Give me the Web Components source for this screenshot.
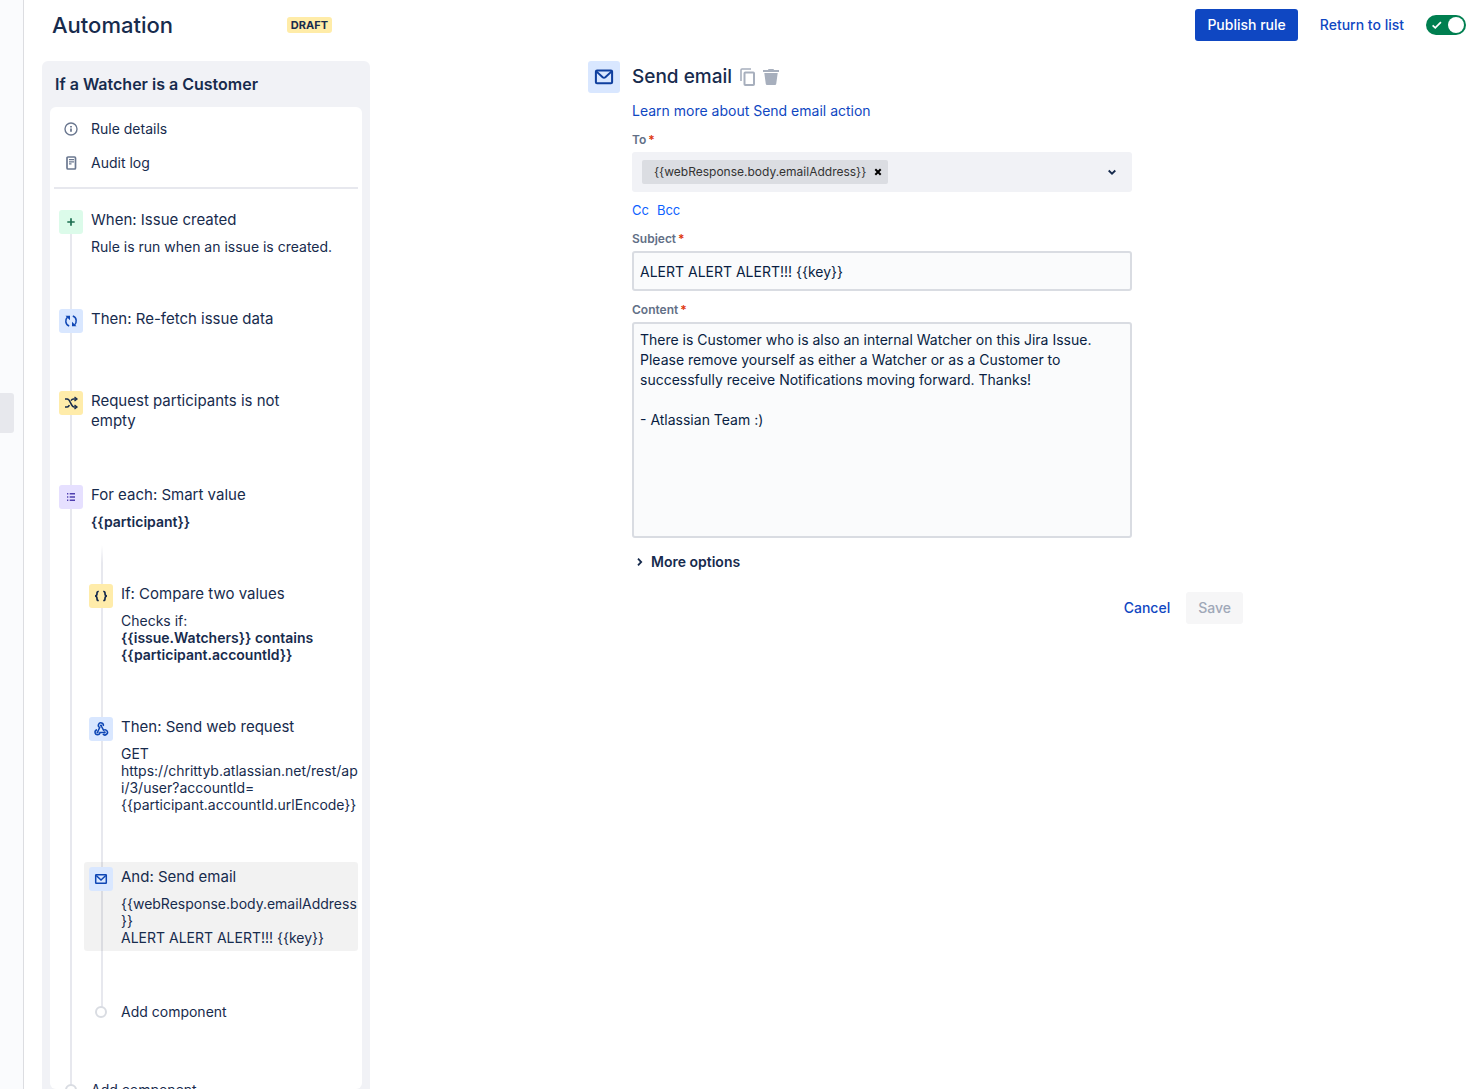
<!DOCTYPE html>
<html lang="en">
<head>
<meta charset="utf-8">
<meta name="viewport" content="width=device-width, initial-scale=1">
<title>Automation</title>
<style>
    :root {
        --text: #172b4d;
        --text-subtle: #626f86;
        --link: #0f47c2;
        --surface-sunken: #f1f2f6;
        --line: #e7e8ee;
        --border: #d9dce2;
        --input: #fafbfc;
    }

    body {
        margin: 0;
        color: var(--text);
        background: #fff;
        font-family: Inter, "Liberation Sans", sans-serif;
        font-size: 14px;
        line-height: 20px;
    }
</style>
</head>
<body>
<automation-app>
    <rule-header slot="header" heading="Automation" status="Draft"></rule-header>

    <rule-sidebar slot="sidebar" heading="If a Watcher is a Customer">
        <rule-link slot="links" icon="info">Rule details</rule-link>
        <rule-link slot="links" icon="log">Audit log</rule-link>

        <rule-step icon="plus" tone="green" heading="When: Issue created">Rule is run when an issue is created.</rule-step>
        <rule-step icon="refresh" tone="blue" heading="Then: Re-fetch issue data"></rule-step>
        <rule-step icon="shuffle" tone="yellow" heading="Request participants is not empty"></rule-step>
        <rule-step icon="list" tone="purple" heading="For each: Smart value"><b>{{participant}}</b></rule-step>
        <rule-branch>
            <rule-step icon="braces" tone="yellow" heading="If: Compare two values">Checks if:<br><b>{{issue.Watchers}} contains {{participant.accountId}}</b></rule-step>
            <rule-step icon="webhook" tone="blue" heading="Then: Send web request">GET<br>https://chrittyb.atlassian.net/rest/api/3/user?accountId=<br>{{participant.accountId.urlEncode}}</rule-step>
            <rule-step icon="mail" tone="blue" heading="And: Send email" selected>{{webResponse.body.emailAddress}}<br>ALERT ALERT ALERT!!! {{key}}</rule-step>
            <add-component></add-component>
        </rule-branch>
        <add-component></add-component>
    </rule-sidebar>

    <email-action></email-action>
</automation-app>

<script>
const ICONS = {
    info: '<circle cx="8" cy="8" r="6"/><path d="M8 7.6v3.2" stroke-width="1.800"/><path d="M8 5v1.500" stroke-width="1.800"/>',
    log: '<rect x="4" y="2" width="8.500" height="12" rx="1" stroke-width="1.700"/><path d="M6 4.700h5M6 6.800h5M6 8.900h2.500" stroke-width="1.200"/>',
    plus: '<path d="M8 4.300v7.400M4.300 8h7.400" stroke-width="1.700"/>',
    refresh: '<path d="M6.200 13C2 11.500 2 6.500 4.500 4M9.800 3C14 4.500 14 9.500 11.500 12"/><path d="M2.500 2.700H7v4.500zM13.500 13.300H9V8.800z" fill="currentColor" stroke="none"/>',
    shuffle: '<path d="M2 4h2.200c3.300 0 3.500 8 7 8H13M2 12h2.200c1 0 1.700-.8 2.200-1.800M8 5.600C8.600 4.600 9.500 4 10.500 4H13"/><path d="M11.500 2L14 4l-2.500 2M11.500 10l2.500 2-2.500 2" stroke-width="1.300"/>',
    list: '<path d="M4 4.700h1.300M4 8h1.300M4 11.300h1.300M6.700 4.700H12M6.700 8H12M6.700 11.300H12"/>',
    braces: '<path d="M5.800 3.500h-.6C4 3.500 4 4.300 4 5.500S3.800 8 2 8C3.800 8 4 9.300 4 10.500s0 2 1.200 2h.6M10.200 3.500h.6c1.200 0 1.200.8 1.200 2S12.200 8 14 8C12.200 8 12 9.300 12 10.500s0 2-1.200 2h-.6" stroke-width="1.700"/>',
    webhook: '<g stroke-width="1.500"><path d="M10.300 5A2.500 2.500 0 1 0 6.700 6.600L4.600 10.900"/><path d="M8 4.500l2.500 4.700a2.600 2.600 0 1 1-.6 3.900"/><path d="M4 8.700a2.500 2.500 0 1 0 3 2.700h4.600"/></g><g fill="currentColor" stroke="none"><circle cx="8" cy="4.500" r="1.100"/><circle cx="4.500" cy="11.300" r="1.100"/><circle cx="11.700" cy="11.400" r="1.100"/></g>',
    mail: '<rect x="2.700" y="3.700" width="10.600" height="8.600" rx=".5"/><path d="M3.200 4.500L8 9l4.800-4.500"/>',
    mailLarge: '<rect x="0.800" y="2.200" width="14.400" height="11.400" rx="1"/><path d="M1.200 3l5.600 5.200q1.200 1 2.400 0L14.800 3"/>',
    chevronDown: '<path d="M4.700 6.500L8 9.700l3.300-3.200"/>',
    chevronRight: '<path d="M6 4.700L9.200 8 6 11.300"/>',
    cross: '<path d="M5.300 5.300l5.400 5.400M10.700 5.300l-5.400 5.400"/>',
    check: '<path d="M3 8.300l3 2.900 6.500-6.400"/>'
};

function icon(name, size = 16, weight = 1.5) {
    return `<svg width="${size}" height="${size}" viewBox="0 0 16 16" fill="none" stroke="currentColor" stroke-width="${weight}" overflow="visible" aria-hidden="true">${ICONS[name]}</svg>`;
}

const BASE = `
    :host, * { box-sizing: border-box; }
    button, input, textarea { font: inherit; color: inherit; margin: 0; }
    button { border: 0; padding: 0; background: none; cursor: pointer; }
    svg { display: block; flex-shrink: 0; }
    a { color: var(--link); text-decoration: none; }
`;

/** Page frame: collapsed nav rail, header on top, sidebar beside the editor */
class AutomationApp extends HTMLElement {
    constructor() {
        super();
        this.attachShadow({ mode: 'open' }).innerHTML = `
            <style>
                ${BASE}
                :host { display: flex; height: 100vh; overflow: hidden; }
                .rail {
                    display: flex;
                    align-items: center;
                    flex: 0 0 24px;
                    padding-bottom: 263px;
                    background: #fafbfd;
                    border-right: 1px solid #dcdde1;
                }
                .handle { width: 14px; height: 40px; background: #e7e8ed; border-radius: 0 3px 3px 0; }
                .main {
                    flex: 1;
                    min-width: 0;
                    display: flex;
                    flex-direction: column;
                    padding: 0 18px;
                }
                .body { flex: 1; min-height: 0; display: flex; }
                .editor { flex: 1; min-width: 0; overflow: auto; }
            </style>
            <nav class="rail" aria-label="Project navigation"><button class="handle" aria-label="Expand"></button></nav>
            <div class="main">
                <slot name="header"></slot>
                <div class="body">
                    <slot name="sidebar"></slot>
                    <main class="editor"><slot></slot></main>
                </div>
            </div>
        `;
    }
}

class RuleHeader extends HTMLElement {
    constructor() {
        super();
        this.attachShadow({ mode: 'open' });
    }

    connectedCallback() {
        this.shadowRoot.innerHTML = `
            <style>
                ${BASE}
                :host { display: flex; justify-content: space-between; align-items: center; flex: 0 0 50px; margin-bottom: 11px; }
                .title { display: flex; align-items: center; justify-content: space-between; width: 290px; padding-left: 10px; }
                h1 { margin: 0; font-size: 22px; line-height: 28px; font-weight: 500; }
                .badge {
                    padding: 0 4px;
                    border-radius: 3px;
                    background: #ffeca8;
                    font-size: 11px;
                    line-height: 16px;
                    font-weight: 700;
                    text-transform: uppercase;
                }
                .actions { display: flex; align-items: center; gap: 10px; }
                .btn { height: 32px; padding: 0 12px; border-radius: 3px; font-weight: 500; color: var(--link); line-height: 32px; }
                .primary { background: var(--link); color: #fff; }
                .toggle { position: relative; display: block; width: 40px; height: 20px; color: #fff; }
                .toggle input {
                    appearance: none;
                    display: flex;
                    justify-content: flex-end;
                    width: 40px;
                    height: 20px;
                    padding: 2px;
                    border-radius: 10px;
                    background: #007f50;
                }
                .toggle input::before { content: ""; width: 16px; height: 16px; border-radius: 50%; background: #fff; }
                .toggle svg { position: absolute; left: 4px; top: 3px; pointer-events: none; }
            </style>
            <div class="title">
                <h1>${this.getAttribute('heading')}</h1>
                <span class="badge">${this.getAttribute('status')}</span>
            </div>
            <div class="actions">
                <button class="btn primary">Publish rule</button>
                <a class="btn" href="#">Return to list</a>
                <label class="toggle"><input type="checkbox" checked aria-label="Rule enabled">${icon('check', 14, 2)}</label>
            </div>
        `;
    }
}

class RuleSidebar extends HTMLElement {
    constructor() {
        super();
        this.attachShadow({ mode: 'open' });
    }

    connectedCallback() {
        this.shadowRoot.innerHTML = `
            <style>
                ${BASE}
                :host {
                    display: flex;
                    flex-direction: column;
                    flex: 0 0 328px;
                    padding: 0 8px;
                    background: var(--surface-sunken);
                    border-radius: 6px 6px 0 0;
                    min-height: 0;
                }
                h2 { flex: 0 0 46px; margin: 0; padding-left: 5px; font-size: 16px; line-height: 46px; font-weight: 600; }
                .card { flex: 1; min-height: 0; overflow: hidden; padding: 5px 4px 0; background: #fff; border-radius: 6px; }
                .links { padding-bottom: 7px; border-bottom: 2px solid var(--line); margin-bottom: 16px; }
                .steps {
                    display: flex;
                    flex-direction: column;
                    gap: 44px;
                    background: linear-gradient(var(--line), var(--line)) 16px 17px / 2px calc(100% - 34px) no-repeat;
                }
            </style>
            <h2>${this.getAttribute('heading')}</h2>
            <div class="card">
                <div class="links"><slot name="links"></slot></div>
                <div class="steps"><slot></slot></div>
            </div>
        `;
    }
}

class RuleLink extends HTMLElement {
    constructor() {
        super();
        this.attachShadow({ mode: 'open' });
    }

    connectedCallback() {
        this.shadowRoot.innerHTML = `
            <style>
                ${BASE}
                :host { display: block; }
                a { display: flex; align-items: center; gap: 12px; height: 34px; padding-left: 9px; color: var(--text); }
                svg { color: #6b7890; }
            </style>
            <a href="#">${icon(this.getAttribute('icon'), 16, 1.4)}<slot></slot></a>
        `;
    }
}

/** One rule component: coloured icon tile, heading, optional description in the slot */
class RuleStep extends HTMLElement {
    constructor() {
        super();
        this.attachShadow({ mode: 'open' });
    }

    connectedCallback() {
        this.shadowRoot.innerHTML = `
            <style>
                ${BASE}
                :host { display: flex; gap: 8px; min-height: 38px; padding: 5px 0 5px 5px; border-radius: 3px; }
                :host([selected]) { background: rgba(0, 0, 0, 0.05); }
                .tile {
                    display: flex;
                    align-items: center;
                    justify-content: center;
                    flex: 0 0 24px;
                    height: 24px;
                    border-radius: 3px;
                }
                .green { background: #dcfbea; color: #1c6e50; }
                .blue { background: #d9e7ff; color: #0f47b5; }
                .yellow { background: #ffecaa; color: #172b4d; }
                .purple { background: #e6e0ff; color: #4f3fb0; }
                .content { flex: 1; min-width: 0; }
                h3 { margin: 0; padding-right: 40px; font-size: 15px; line-height: 20px; font-weight: 400; }
                .desc { margin-top: 8px; line-height: 17px; word-break: break-word; }
                .desc.url { word-break: break-all; }
                ::slotted(b) { font-weight: 600; }
            </style>
            <span class="tile ${this.getAttribute('tone')}">${icon(this.getAttribute('icon'))}</span>
            <div class="content">
                <h3>${this.getAttribute('heading')}</h3>
                ${this.description()}
            </div>
        `;
    }

    // URLs break at any character instead of after a slash
    description() {
        const text = this.textContent.trim();
        if (!text) return '';
        return `<div class="desc ${text.includes('://') ? 'url' : ''}"><slot></slot></div>`;
    }
}

/** Indented steps, joined by a line that fades in above the first one */
class RuleBranch extends HTMLElement {
    constructor() {
        super();
        this.attachShadow({ mode: 'open' }).innerHTML = `
            <style>
                :host {
                    display: flex;
                    flex-direction: column;
                    gap: 44px;
                    margin: -34px 0 0 30px;
                    padding-top: 34px;
                    background: linear-gradient(transparent, var(--line) 18px) 17px 0 / 2px calc(100% - 17px) no-repeat;
                }
            </style>
            <slot></slot>
        `;
    }
}

class AddComponent extends HTMLElement {
    constructor() {
        super();
        this.attachShadow({ mode: 'open' }).innerHTML = `
            <style>
                ${BASE}
                :host { display: block; }
                button { display: flex; align-items: center; gap: 14px; height: 34px; padding-left: 11px; }
                .dot { width: 12px; height: 12px; border: 2px solid var(--border); border-radius: 50%; background: #fff; }
            </style>
            <button><span class="dot"></span>Add component</button>
        `;
    }
}

/** Label with required mark above the control */
const FIELD = `
    .field { display: flex; flex-direction: column; max-width: 500px; }
    .field label { font-size: 12px; line-height: 16px; font-weight: 600; color: var(--text-subtle); margin-bottom: 4px; }
    .field label span { color: #de350b; margin-left: 2px; }
`;

class EmailAction extends HTMLElement {
    constructor() {
        super();
        this.attachShadow({ mode: 'open' });
    }

    connectedCallback() {
        this.shadowRoot.innerHTML = `
            <style>
                ${BASE}
                ${FIELD}
                :host { display: block; max-width: 660px; margin: 0 auto; padding-right: 5px; }
                header { display: flex; align-items: center; height: 32px; }
                .tile {
                    display: flex;
                    align-items: center;
                    justify-content: center;
                    width: 32px;
                    height: 32px;
                    margin-right: 12px;
                    border-radius: 3px;
                    background: #d9e7ff;
                    color: #0f3f9e;
                }
                h2 { margin: 0 8px 0 0; font-size: 19px; line-height: 24px; font-weight: 500; }
                header button { color: #a7afbd; margin-right: 8px; }
                form { padding-left: 44px; }
                .more-link { display: block; margin: 8px 0 11px; }
                .picker {
                    display: flex;
                    align-items: center;
                    height: 40px;
                    padding: 0 12px 0 10px;
                    background: var(--surface-sunken);
                    border-radius: 3px;
                }
                .token {
                    display: flex;
                    align-items: center;
                    gap: 4px;
                    height: 24px;
                    padding: 0 2px 0 12px;
                    background: #dbdde2;
                    color: #333;
                    border-radius: 2px;
                    font-size: 12px;
                }
                .token button { color: #000; }
                .picker input { flex: 1; min-width: 0; border: 0; outline: 0; background: none; }
                .copies { display: flex; gap: 8px; margin: 8px 0 11px; font-size: 13px; }
                .copies button { color: #0c5fff; }
                .box { width: 100%; border: 2px solid var(--border); border-radius: 3px; background: var(--input); padding: 6px; color: #091e42; outline: 0; }
                input.box { height: 40px; margin-bottom: 11px; }
                textarea.box { display: block; height: 216px; resize: none; }
                .options { display: flex; align-items: center; gap: 3px; margin-top: 14px; font-weight: 600; }
                footer { display: flex; justify-content: flex-end; gap: 4px; margin-top: 20px; }
                footer button { height: 32px; padding: 0 12px; border-radius: 3px; font-weight: 500; color: var(--link); }
                footer button:disabled { background: #f6f6f7; color: #a0a8b8; }
            </style>
            <header>
                <span class="tile">${icon('mailLarge', 18, 1.8)}</span>
                <h2>Send email</h2>
                <button aria-label="Duplicate">
                    <svg width="15" height="18" viewBox="0 0 15 18" fill="none" stroke="currentColor" stroke-width="2">
                        <path d="M1 13V2q0-1 1-1h9" stroke-width="1.600"/><rect x="4.500" y="4.500" width="9.500" height="12.500" rx=".8"/>
                    </svg>
                </button>
                <button aria-label="Delete">
                    <svg width="16" height="16" viewBox="0 0 16 16" fill="currentColor">
                        <path d="M0 1h5q0-1 1-1h4q1 0 1 1h5v2H0zM1.300 4h13.400l-1.500 11q-.2 1-1.200 1H4q-1 0-1.200-1z"/>
                    </svg>
                </button>
            </header>
            <form>
                <a class="more-link" href="#">Learn more about Send email action</a>
                <div class="field">
                    <label for="to">To<span>*</span></label>
                    <div class="picker">
                        <span class="token">{{webResponse.body.emailAddress}}<button type="button" aria-label="Remove">${icon('cross', 16, 2)}</button></span>
                        <input id="to" role="combobox" aria-expanded="false">
                        ${icon('chevronDown', 16, 1.8)}
                    </div>
                </div>
                <div class="copies"><button type="button">Cc</button><button type="button">Bcc</button></div>
                <div class="field">
                    <label for="subject">Subject<span>*</span></label>
                    <input class="box" id="subject" value="ALERT ALERT ALERT!!! {{key}}">
                </div>
                <div class="field">
                    <label for="content">Content<span>*</span></label>
                    <textarea class="box" id="content">There is Customer who is also an internal Watcher on this Jira Issue. Please remove yourself as either a Watcher or as a Customer to successfully receive Notifications moving forward. Thanks!

- Atlassian Team :)</textarea>
                </div>
                <button class="options" type="button">${icon('chevronRight', 16, 1.8)}More options</button>
                <footer>
                    <button type="button">Cancel</button>
                    <button type="submit" disabled>Save</button>
                </footer>
            </form>
        `;
    }
}

customElements.define('automation-app', AutomationApp);
customElements.define('rule-header', RuleHeader);
customElements.define('rule-sidebar', RuleSidebar);
customElements.define('rule-link', RuleLink);
customElements.define('rule-step', RuleStep);
customElements.define('rule-branch', RuleBranch);
customElements.define('add-component', AddComponent);
customElements.define('email-action', EmailAction);
</script>
</body>
</html>
